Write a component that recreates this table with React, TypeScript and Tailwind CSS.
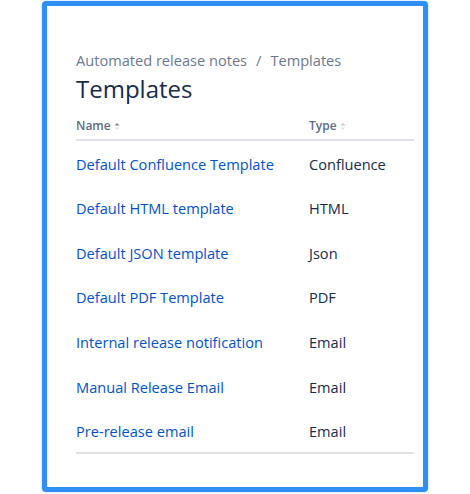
const rows = [
  { name: "Default Confluence Template", type: "Confluence" },
  { name: "Default HTML template", type: "HTML" },
  { name: "Default JSON template", type: "Json" },
  { name: "Default PDF Template", type: "PDF" },
  { name: "Internal release notification", type: "Email" },
  { name: "Manual Release Email", type: "Email" },
  { name: "Pre-release email", type: "Email" },
];

const SortIcon = ({ active }: { active?: boolean }) => (
  <svg width="6" height="9" viewBox="0 0 6 9" className="ml-[3px]">
    <path d="M0.5 3.5 L3 1 L5.5 3.5 Z" fill={active ? "#7a869a" : "#c1c7d0"} />
    <path d="M0.5 5.5 L3 8 L5.5 5.5 Z" fill="#dfe1e6" />
  </svg>
);

const App = () => {
  return (
    <div className="w-[470px] h-[494px] bg-white pt-px pl-[42px]" style={{ fontFamily: '"Open Sans", "Noto Sans", sans-serif' }}>
      <div className="w-[386px] h-[491px] border-[5px] border-[#2f8ff5] rounded-[4px] shadow-[0_0_3px_rgba(47,143,245,0.35)] pl-[29px] pr-[9px] pt-[42px]">
        <div className="text-[14.6px] leading-[24px] text-[#6b778c]">
          Automated release notes<span className="mx-[9px]">/</span>Templates
        </div>
        <h1 className="text-[24px] leading-[30px] text-[#172b4d] mt-[2px]">Templates</h1>
        <table className="w-full mt-[13px] border-collapse">
          <thead>
            <tr className="border-b-2 border-[#dfe1e6]">
              <th className="text-left font-semibold text-[12px] text-[#5e6c84] pb-[4px] w-[233px]">
                <span className="inline-flex items-center">Name<SortIcon active /></span>
              </th>
              <th className="text-left font-semibold text-[12px] text-[#5e6c84] pb-[4px]">
                <span className="inline-flex items-center">Type<SortIcon /></span>
              </th>
            </tr>
          </thead>
          <tbody className="border-b-2 border-[#dfe1e6]">
            {rows.map((r) => (
              <tr key={r.name} className="h-[44.7px]">
                <td className="text-[14.6px] text-[#0052cc] pt-[4px]">{r.name}</td>
                <td className="text-[14.6px] text-[#172b4d] pt-[4px]">{r.type}</td>
              </tr>
            ))}
          </tbody>
        </table>
      </div>
    </div>
  );
};

export default App;
